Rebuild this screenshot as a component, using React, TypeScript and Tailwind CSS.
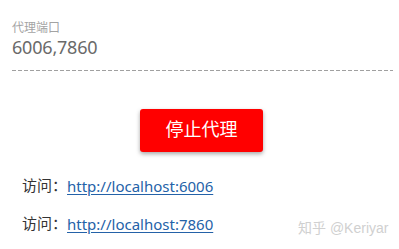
export default function App() {
  return (
    <div className="relative w-[399px] h-[249px] overflow-hidden bg-white font-['Liberation_Sans','Noto_Sans_CJK_SC',sans-serif]">
      {/* Port field */}
      <div className="pl-3 pr-[6px] pt-[20px]">
        <div className="text-[12px] leading-[16px] text-[#a3a3a3]">代理端口</div>
        <div className="font-['Noto_Sans',sans-serif] text-[18px] leading-[22px] text-[#6a6a6a] tracking-[-0.2px]">6006,7860</div>
        <div className="mt-[12px] h-px bg-[repeating-linear-gradient(to_right,#a0a0a0_0_4px,transparent_4px_6px)]" />
      </div>

      {/* Stop button */}
      <div className="flex justify-center pl-[4px] mt-[38px]">
        <button className="w-[123px] h-[43px] rounded-[3px] bg-[#ff0000] text-white text-[18px] shadow-[0_2px_4px_rgba(0,0,0,0.35)]">
          停止代理
        </button>
      </div>

      {/* Links */}
      <div className="mt-[23px] pl-[22px] flex flex-col gap-[16px] text-[15px] leading-[22px] text-[#333]">
        <div className="flex">
          <span>访问：</span>
          <a href="#" className="font-['Noto_Sans',sans-serif] text-[#2462a8] underline underline-offset-2">http://localhost:6006</a>
        </div>
        <div className="flex">
          <span>访问：</span>
          <a href="#" className="font-['Noto_Sans',sans-serif] text-[#2462a8] underline underline-offset-2">http://localhost:7860</a>
        </div>
      </div>

      {/* Watermark */}
      <div className="absolute left-[298px] top-[221px] text-[14px] leading-[14px] text-[#d0d0d0]">
        知乎 @Keriyar
      </div>
    </div>
  );
}
